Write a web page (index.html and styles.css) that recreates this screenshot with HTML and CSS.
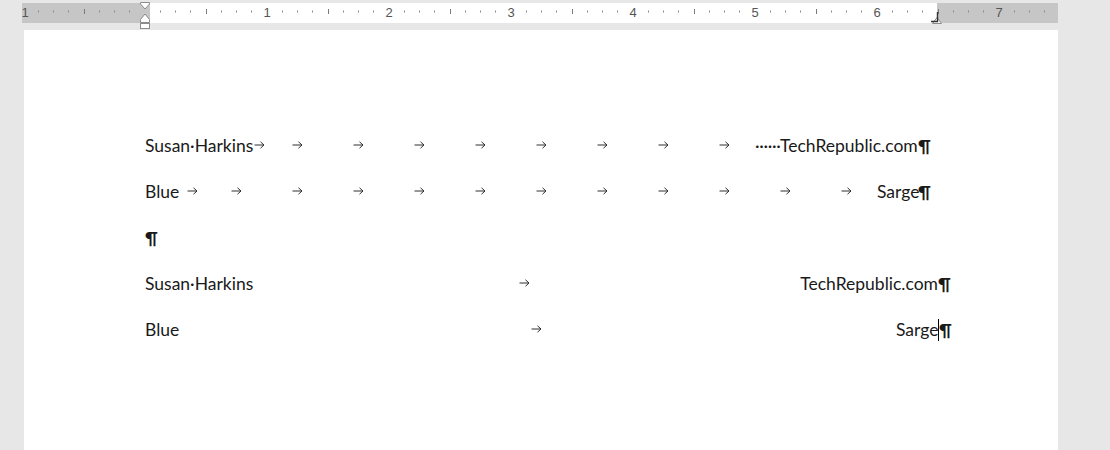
FILE: index.html
```html
<!DOCTYPE html>
<html>
<head>
<meta charset="utf-8">
<link rel="stylesheet" href="styles.css">
</head>
<body>
<svg class="defs" width="0" height="0" xmlns="http://www.w3.org/2000/svg">
  <symbol id="arr" viewBox="0 0 11 8">
    <path d="M0.5 4 H10 M6.5 0.8 L10 4 L6.5 7.2" fill="none" stroke="#303030" stroke-width="1"/>
  </symbol>
</svg>
<svg class="ruler" width="1036" height="30" viewBox="0 0 1036 30" xmlns="http://www.w3.org/2000/svg">
  <defs>
    <pattern id="ticks" patternUnits="userSpaceOnUse" x="1" y="0" width="122" height="30">
      <rect x="15" y="10.5" width="1" height="2" fill="#8a8a8a"/>
      <rect x="30" y="10.5" width="1" height="2" fill="#8a8a8a"/>
      <rect x="45" y="10.5" width="1" height="2" fill="#8a8a8a"/>
      <rect x="61" y="9" width="1" height="5" fill="#7a7a7a"/>
      <rect x="76" y="10.5" width="1" height="2" fill="#8a8a8a"/>
      <rect x="91" y="10.5" width="1" height="2" fill="#8a8a8a"/>
      <rect x="106" y="10.5" width="1" height="2" fill="#8a8a8a"/>
    </pattern>
  </defs>
  <rect x="0" y="3" width="123" height="20" fill="#c6c6c6"/>
  <rect x="123" y="3" width="792" height="20" fill="#ffffff"/>
  <rect x="915" y="3" width="121" height="20" fill="#c6c6c6"/>
  <rect x="0" y="3" width="1036" height="20" fill="url(#ticks)"/>
  <rect x="118" y="4" width="10" height="18" fill="#c6c6c6"/>
  <g class="nums" fill="#555" font-family="Liberation Sans, Arial, sans-serif" font-size="13" text-anchor="middle">
    <text x="3" y="17">1</text>
    <text x="245" y="17">1</text>
    <text x="367" y="17">2</text>
    <text x="489" y="17">3</text>
    <text x="611" y="17">4</text>
    <text x="733" y="17">5</text>
    <text x="855" y="17">6</text>
    <text x="977" y="17">7</text>
  </g>
  <g fill="#ffffff" stroke="#8c8c8c" stroke-width="1">
    <path d="M118.5 2.5 H127.5 V4 L123 9 L118.5 4 Z"/>
    <path d="M123 14 L127.5 19.5 V22.5 H118.5 V19.5 Z"/>
    <rect x="118.5" y="23.5" width="9" height="5"/>
    <path d="M910.5 23.5 L915 17.5 L919.5 23.5 Z"/>
  </g>
  <path d="M915.5 12 V21.5 H909" fill="none" stroke="#333" stroke-width="1.4"/>
</svg>
<div class="page">
  <div class="doc">
    <p class="line"><span class="txt w106">Susan·Harkins</span><span class="tab t16"><svg class="arrow"><use href="#arr"/></svg></span><span class="tab t61"><svg class="arrow"><use href="#arr"/></svg></span><span class="tab t61"><svg class="arrow"><use href="#arr"/></svg></span><span class="tab t61"><svg class="arrow"><use href="#arr"/></svg></span><span class="tab t61"><svg class="arrow"><use href="#arr"/></svg></span><span class="tab t61"><svg class="arrow"><use href="#arr"/></svg></span><span class="tab t61"><svg class="arrow"><use href="#arr"/></svg></span><span class="tab t61"><svg class="arrow"><use href="#arr"/></svg></span><span class="tab t61"><svg class="arrow"><use href="#arr"/></svg></span><span class="txt lead">······</span><span class="txt w138">TechRepublic.com</span><span class="mark">¶</span></p>
    <p class="line"><span class="txt w33">Blue</span><span class="tab t28"><svg class="arrow"><use href="#arr"/></svg></span><span class="tab t61"><svg class="arrow"><use href="#arr"/></svg></span><span class="tab t61"><svg class="arrow"><use href="#arr"/></svg></span><span class="tab t61"><svg class="arrow"><use href="#arr"/></svg></span><span class="tab t61"><svg class="arrow"><use href="#arr"/></svg></span><span class="tab t61"><svg class="arrow"><use href="#arr"/></svg></span><span class="tab t61"><svg class="arrow"><use href="#arr"/></svg></span><span class="tab t61"><svg class="arrow"><use href="#arr"/></svg></span><span class="tab t61"><svg class="arrow"><use href="#arr"/></svg></span><span class="tab t61"><svg class="arrow"><use href="#arr"/></svg></span><span class="tab t61"><svg class="arrow"><use href="#arr"/></svg></span><span class="tab t61"><svg class="arrow"><use href="#arr"/></svg></span><span class="txt w41 right">Sarge</span><span class="mark">¶</span></p>
    <p class="line"><span class="mark">¶</span></p>
    <p class="line"><span class="txt w106">Susan·Harkins</span><span class="tab gap4"><svg class="arrow"><use href="#arr"/></svg></span><span class="txt w138 right">TechRepublic.com</span><span class="mark">¶</span></p>
    <p class="line"><span class="txt w33">Blue</span><span class="tab gap5"><svg class="arrow"><use href="#arr"/></svg></span><span class="txt w42 right">Sarge</span><span class="caret"></span><span class="mark">¶</span></p>
  </div>
</div>
</body>
</html>
```
FILE: styles.css
```css
html, body {
  margin: 0;
  padding: 0;
}
body {
  background: #e7e7e7;
  width: 1110px;
  height: 450px;
  overflow: hidden;
}
.defs {
  position: absolute;
  width: 0;
  height: 0;
}
.ruler {
  display: block;
  margin-left: 22px;
}
.page {
  margin-left: 24px;
  width: 1034px;
  height: 420px;
  background: #ffffff;
}
.doc {
  padding: 93px 0 0 121px;
  font-family: "Lato", "Liberation Sans", sans-serif;
  font-size: 17.5px;
  color: #1a1a1a;
}
.line {
  margin: 0;
  height: 46px;
  line-height: 46px;
  white-space: nowrap;
}
.txt, .tab, .mark {
  display: inline-block;
  vertical-align: baseline;
}
.right {
  text-align: right;
}
.w106 { width: 106px; }
.w33 { width: 33px; }
.w138 { width: 138px; }
.w41 { width: 41px; }
.w42 { width: 42px; }
.lead { width: 25px; letter-spacing: -0.3px; }
.tab {
  text-align: center;
}
.arrow {
  width: 11px;
  height: 8px;
  vertical-align: 3px;
}
.t16 { width: 16px; }
.t28 { width: 28px; }
.t61 { width: 61px; }
.gap4 {
  width: 549px;
  padding-left: 268px;
  box-sizing: border-box;
  text-align: left;
}
.gap5 {
  width: 718px;
  padding-left: 353px;
  box-sizing: border-box;
  text-align: left;
}
.mark {
  width: 10px;
  text-align: center;
  font-weight: 700;
}
.caret {
  display: inline-block;
  width: 1px;
  height: 22px;
  background: #000;
  vertical-align: -5px;
}
```
